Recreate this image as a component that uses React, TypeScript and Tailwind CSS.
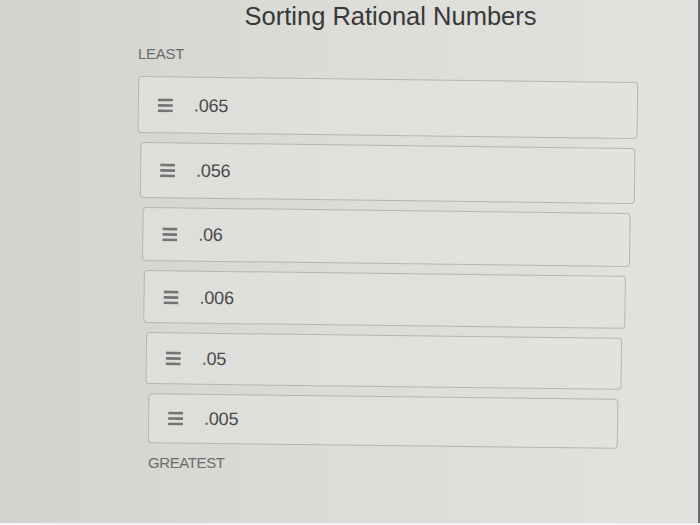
import React from "react";

const items = [
  { v: ".065", cls: "-ml-[2px] w-[500px] h-[57px]" },
  { v: ".056", cls: "ml-[1px] w-[495px] h-[56px]" },
  { v: ".06", cls: "ml-[4px] w-[488px] h-[54px]" },
  { v: ".006", cls: "ml-[6px] w-[482px] h-[53px]" },
  { v: ".05", cls: "ml-[9px] w-[476px] h-[52px]" },
  { v: ".005", cls: "ml-[12px] w-[470px] h-[50px]" },
];

function Grip() {
  return (
    <svg width="15" height="14" viewBox="0 0 15 14" className="shrink-0">
      <rect x="0" y="0.3" width="15" height="2.7" rx="0.6" fill="#747474" />
      <rect x="0" y="5.8" width="15" height="2.7" rx="0.6" fill="#747474" />
      <rect x="0" y="11.3" width="15" height="2.7" rx="0.6" fill="#747474" />
    </svg>
  );
}

export default function App() {
  return (
    <div className="relative w-[700px] h-[525px] overflow-hidden bg-gradient-to-r from-[#d2d2ce] via-[#dcdcd8] to-[#e2e2de] font-['Liberation_Sans',Arial,sans-serif]">
      <div className="ml-[138px] w-[499px]">
        <h1 className="pt-[1px] pl-[6px] text-center text-[25.5px] leading-[30px] text-[#383838]">
          Sorting Rational Numbers
        </h1>
        <div className="mt-[15px] text-[15px] leading-[15px] text-[#6c6c6c] tracking-[-0.3px]">
          LEAST
        </div>
        <div className="mt-[18px] flex flex-col gap-[9px] rotate-[0.7deg]">
          {items.map((it) => (
            <div
              key={it.v}
              className={`${it.cls} flex items-center rounded-[4px] border border-[#b5b5b3] bg-[#e2e2df]/60 pl-[19px]`}
            >
              <Grip />
              <span className="ml-[21px] text-[18px] leading-[20px] text-[#4a4a4a] tracking-[-0.2px]">
                {it.v}
              </span>
            </div>
          ))}
        </div>
        <div className="ml-[10px] mt-[9px] text-[15px] leading-[15px] text-[#6c6c6c] tracking-[-0.4px]">
          GREATEST
        </div>
      </div>
      <div className="absolute right-0 top-0 h-full w-[2px] bg-[#6a6a6a]" />
      <div className="absolute bottom-0 left-0 h-[2px] w-full bg-[#f4f4f4]" />
    </div>
  );
}
